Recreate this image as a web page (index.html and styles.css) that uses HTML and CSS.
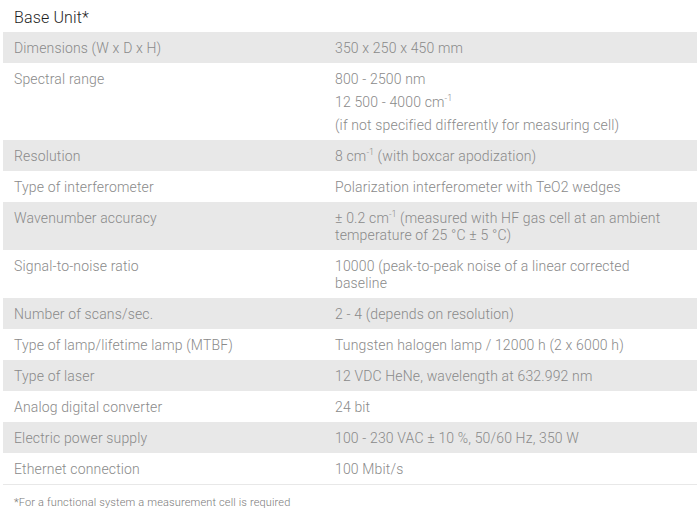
FILE: index.html
```html
<!DOCTYPE html>
<html>
<head>
<meta charset="utf-8">
<link rel="stylesheet" href="styles.css">
</head>
<body>
<div class="spec">
  <h2 class="title">Base Unit*</h2>
  <div class="table">
    <div class="row alt"><div class="key">Dimensions (W x D x H)</div><div class="val">350 x 250 x 450 mm</div></div>
    <div class="row"><div class="key">Spectral range</div><div class="val"><p>800 - 2500 nm</p><p>12 500 - 4000 cm<sup>-1</sup></p><p>(if not specified differently for measuring cell)</p></div></div>
    <div class="row alt"><div class="key">Resolution</div><div class="val">8 cm<sup>-1</sup> (with boxcar apodization)</div></div>
    <div class="row"><div class="key">Type of interferometer</div><div class="val">Polarization interferometer with TeO2 wedges</div></div>
    <div class="row alt"><div class="key">Wavenumber accuracy</div><div class="val">± 0.2 cm<sup>-1</sup> (measured with HF gas cell at an ambient temperature of 25 °C ± 5 °C)</div></div>
    <div class="row"><div class="key">Signal-to-noise ratio</div><div class="val">10000 (peak-to-peak noise of a linear corrected baseline</div></div>
    <div class="row alt"><div class="key">Number of scans/sec.</div><div class="val">2 - 4 (depends on resolution)</div></div>
    <div class="row"><div class="key">Type of lamp/lifetime lamp (MTBF)</div><div class="val">Tungsten halogen lamp / 12000 h (2 x 6000 h)</div></div>
    <div class="row alt"><div class="key">Type of laser</div><div class="val">12 VDC HeNe, wavelength at 632.992 nm</div></div>
    <div class="row"><div class="key">Analog digital converter</div><div class="val">24 bit</div></div>
    <div class="row alt"><div class="key">Electric power supply</div><div class="val">100 - 230 VAC ± 10 %, 50/60 Hz, 350 W</div></div>
    <div class="row last"><div class="key">Ethernet connection</div><div class="val">100 Mbit/s</div></div>
  </div>
  <p class="note">*For a functional system a measurement cell is required</p>
</div>
</body>
</html>
```
FILE: styles.css
```css
html, body {
  margin: 0;
  padding: 0;
  background: #ffffff;
}
body {
  font-family: Roboto, "Liberation Sans", sans-serif;
  font-weight: 300;
  color: #8a8a8a;
  letter-spacing: 0.15px;
}
.spec {
  padding: 0 3px;
}
.title {
  margin: 0;
  padding: 8px 11px 4px;
  font-size: 16px;
  line-height: 20px;
  font-weight: 300;
  color: #1e1e1e;
}
.table {
  display: flex;
  flex-direction: column;
}
.row {
  display: grid;
  grid-template-columns: 321px 1fr;
  font-size: 14px;
  line-height: 17px;
}
.row.alt {
  background: #e8e8e8;
}
.row.last {
  border-bottom: 1px solid #e8e8e8;
}
.key, .val {
  padding: 8px 11px 6px;
}
.val {
  padding-right: 22px;
}
.val p {
  margin: 0 0 6px;
}
.val p:last-child {
  margin-bottom: 0;
}
sup {
  font-size: 9px;
  line-height: 0;
  vertical-align: 6px;
  letter-spacing: 0;
}
.note {
  margin: 0;
  padding: 11px 11px 10px;
  font-size: 11px;
  line-height: 14px;
  color: #7a7a7a;
}
```
